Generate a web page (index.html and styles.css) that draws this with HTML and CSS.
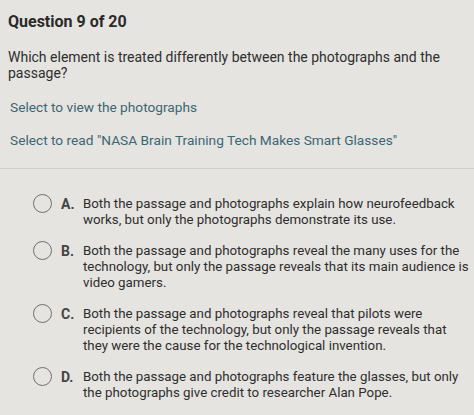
FILE: index.html
```
<!DOCTYPE html>
<html>
    <head>
        <meta charset="utf-8">
        <link rel="stylesheet" href="styles.css">
    </head>
    <body>
        <div class="quiz">
            <h2 class="qhead">Question 9 of 20</h2>
            <p class="prompt">Which element is treated differently between the photographs and the passage?</p>
            <a class="link">Select to view the photographs</a>
            <a class="link">Select to read "NASA Brain Training Tech Makes Smart Glasses"</a>
            <hr>
            <ul class="answers">
                <li><span class="radio"></span><b>A.</b><span class="txt">Both the passage and photographs explain how neurofeedback works, but only the photographs demonstrate its use.</span></li>
                <li><span class="radio"></span><b>B.</b><span class="txt">Both the passage and photographs reveal the many uses for the technology, but only the passage reveals that its main audience is video gamers.</span></li>
                <li><span class="radio"></span><b>C.</b><span class="txt">Both the passage and photographs reveal that pilots were recipients of the technology, but only the passage reveals that they were the cause for the technological invention.</span></li>
                <li><span class="radio"></span><b>D.</b><span class="txt">Both the passage and photographs feature the glasses, but only the photographs give credit to researcher Alan Pope.</span></li>
            </ul>
        </div>
    </body>
</html>
```
FILE: styles.css
```
body{
    margin: 0;
    background: #e5e4e0;
    font-family: Roboto, 'Liberation Sans', sans-serif;
    color: #2e2e2e;
    overflow: hidden;
}
body *{
    box-sizing: border-box;
}
.quiz{
    padding: 12px 0 0 8px;
}
.qhead{
    margin: 0;
    font-size: 16px;
    font-weight: bold;
    color: #2a2a2a;
}
.prompt{
    margin: 18px 0 0;
    font-size: 14px;
    line-height: 16px;
    padding-right: 20px;
}
.link{
    display: block;
    margin-top: 18px;
    font-size: 13.7px;
    line-height: 16px;
    color: #3b6673;
    padding-left: 2px;
}
.link + .link{
    margin-top: 17px;
}
hr{
    border: none;
    border-top: 1px solid #cfcecb;
    margin: 20px 0 0 -8px;
}
.answers{
    list-style-type: none;
    margin: 0;
    padding: 27px 0 0 25px;
}
.answers li{
    display: flex;
    align-items: flex-start;
    font-size: 13.3px;
    line-height: 16px;
    margin-bottom: 15px;
}
.radio{
    flex: none;
    width: 19px;
    height: 19px;
    border: 1.6px solid #707070;
    border-radius: 50%;
    margin: -2px 9px 0 0;
}
.answers b{
    flex: none;
    width: 22px;
    color: #454545;
    font-size: 14px;
}
.txt{
    flex: 1;
    padding-right: 2px;
}
```
